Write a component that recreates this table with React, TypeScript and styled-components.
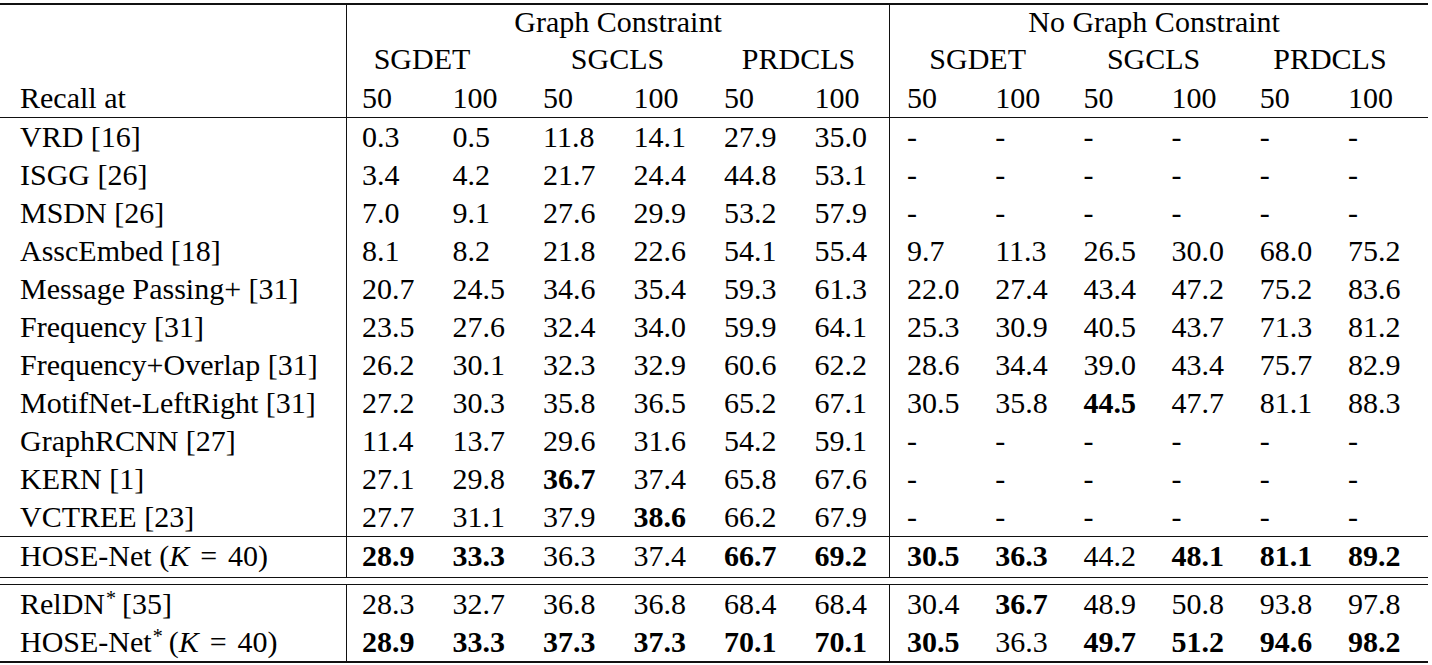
import React from 'react';
import styled, { createGlobalStyle } from 'styled-components';

const GlobalStyle = createGlobalStyle`
  html, body {
    margin: 0;
    padding: 0;
    background: #ffffff;
  }
  body {
    font-family: "Liberation Serif", "Times New Roman", serif;
    color: #000000;
  }
`;

const COLUMNS = '346px repeat(6, 90.5px) repeat(6, 88.2px)';

const Page = styled.div`
  width: 1432px;
  height: 665px;
  padding-top: 3px;
  box-sizing: border-box;
  overflow: hidden;
`;

const Table = styled.div`
  width: 1428px;
  border-top: 2px solid #111;
  border-bottom: 2px solid #111;
  font-size: 30px;
`;

const Row = styled.div<{ $h: number; $rule?: boolean; $pb?: number }>`
  display: grid;
  grid-template-columns: ${COLUMNS};
  height: ${p => p.$h}px;
  box-sizing: content-box;
  padding-right: 10px;
  border-bottom: ${p => (p.$rule ? '1px solid #111' : '0')};

  & > * {
    padding-bottom: ${p => p.$pb ?? 0}px;
  }
`;

const DoubleRule = styled.div`
  height: 6px;
  border-top: 1px solid #111;
  border-bottom: 1px solid #111;
`;

const Label = styled.div`
  display: flex;
  align-items: center;
  padding-left: 20px;
  white-space: nowrap;
`;

const Num = styled.div<{ $pad: number; $first?: boolean; $bold?: boolean }>`
  display: flex;
  align-items: center;
  padding-left: ${p => p.$pad}px;
  border-left: ${p => (p.$first ? '1px solid #111' : '0')};
  font-weight: ${p => (p.$bold ? 700 : 400)};
  white-space: nowrap;
`;

const GroupTitle = styled.div`
  grid-column: span 6;
  display: flex;
  align-items: center;
  justify-content: center;
  border-left: 1px solid #111;
`;

const SubTitle = styled.div<{ $first?: boolean; $shift?: number }>`
  grid-column: span 2;
  display: flex;
  align-items: center;
  justify-content: center;
  padding-right: ${p => p.$shift ?? 0}px;
  border-left: ${p => (p.$first ? '1px solid #111' : '0')};
`;

const Star = styled.span`
  display: inline-block;
  font-size: 20px;
  line-height: 0;
  position: relative;
  top: -6px;
  margin-left: 1px;
  margin-right: 6px;
`;

const Eq = styled.span`
  margin: 0 11px;
`;

type Method = {
  name: React.ReactNode;
  values: string[];
  bold?: number[];
  h?: number;
  pb?: number;
  rule?: boolean;
};

const DASH = ['-', '-', '-', '-', '-', '-'];

const kLabel = (name: React.ReactNode) => (
  <>
    {name} (<i>K</i>
    <Eq>=</Eq>40)
  </>
);

const methods: Method[] = [
  { name: 'VRD [16]', values: ['0.3', '0.5', '11.8', '14.1', '27.9', '35.0', ...DASH] },
  { name: 'ISGG [26]', values: ['3.4', '4.2', '21.7', '24.4', '44.8', '53.1', ...DASH] },
  { name: 'MSDN [26]', values: ['7.0', '9.1', '27.6', '29.9', '53.2', '57.9', ...DASH] },
  {
    name: 'AsscEmbed [18]',
    values: ['8.1', '8.2', '21.8', '22.6', '54.1', '55.4', '9.7', '11.3', '26.5', '30.0', '68.0', '75.2'],
  },
  {
    name: 'Message Passing+ [31]',
    values: ['20.7', '24.5', '34.6', '35.4', '59.3', '61.3', '22.0', '27.4', '43.4', '47.2', '75.2', '83.6'],
  },
  {
    name: 'Frequency [31]',
    values: ['23.5', '27.6', '32.4', '34.0', '59.9', '64.1', '25.3', '30.9', '40.5', '43.7', '71.3', '81.2'],
  },
  {
    name: 'Frequency+Overlap [31]',
    values: ['26.2', '30.1', '32.3', '32.9', '60.6', '62.2', '28.6', '34.4', '39.0', '43.4', '75.7', '82.9'],
  },
  {
    name: 'MotifNet-LeftRight [31]',
    values: ['27.2', '30.3', '35.8', '36.5', '65.2', '67.1', '30.5', '35.8', '44.5', '47.7', '81.1', '88.3'],
    bold: [8],
  },
  { name: 'GraphRCNN [27]', values: ['11.4', '13.7', '29.6', '31.6', '54.2', '59.1', ...DASH] },
  { name: 'KERN [1]', values: ['27.1', '29.8', '36.7', '37.4', '65.8', '67.6', ...DASH], bold: [2] },
  { name: 'VCTREE [23]', values: ['27.7', '31.1', '37.9', '38.6', '66.2', '67.9', ...DASH], bold: [3], rule: true },
  {
    name: kLabel('HOSE-Net'),
    values: ['28.9', '33.3', '36.3', '37.4', '66.7', '69.2', '30.5', '36.3', '44.2', '48.1', '81.1', '89.2'],
    bold: [0, 1, 4, 5, 6, 7, 9, 10, 11],
    h: 40,
    pb: 2,
  },
];

const starred: Method[] = [
  {
    name: (
      <>
        RelDN<Star>*</Star>[35]
      </>
    ),
    values: ['28.3', '32.7', '36.8', '36.8', '68.4', '68.4', '30.4', '36.7', '48.9', '50.8', '93.8', '97.8'],
    bold: [7],
  },
  {
    name: (
      <>
        HOSE-Net<Star>*</Star>(<i>K</i>
        <Eq>=</Eq>40)
      </>
    ),
    values: ['28.9', '33.3', '37.3', '37.3', '70.1', '70.1', '30.5', '36.3', '49.7', '51.2', '94.6', '98.2'],
    bold: [0, 1, 2, 3, 4, 5, 6, 8, 9, 10, 11],
  },
];

const padFor = (i: number) => {
  if (i === 0) return 15;
  if (i === 6) return 17;
  return i < 6 ? 16 : 18;
};

const NumCells = ({ values, bold = [] }: { values: string[]; bold?: number[] }) => (
  <>
    {values.map((v, i) => (
      <Num key={i} $pad={padFor(i)} $first={i === 0 || i === 6} $bold={bold.includes(i)}>
        {v}
      </Num>
    ))}
  </>
);

const MethodRow = ({ m }: { m: Method }) => (
  <Row $h={m.h ?? 38} $rule={m.rule} $pb={m.pb}>
    <Label>{m.name}</Label>
    <NumCells values={m.values} bold={m.bold} />
  </Row>
);

const App = () => {
  const recall = ['50', '100', '50', '100', '50', '100', '50', '100', '50', '100', '50', '100'];

  return (
    <Page>
      <GlobalStyle />
      <Table>
        <Row $h={35} $pb={7}>
          <Label />
          <GroupTitle>Graph Constraint</GroupTitle>
          <GroupTitle>No Graph Constraint</GroupTitle>
        </Row>
        <Row $h={38}>
          <Label />
          <SubTitle $first $shift={30}>
            SGDET
          </SubTitle>
          <SubTitle>SGCLS</SubTitle>
          <SubTitle>PRDCLS</SubTitle>
          <SubTitle $first>SGDET</SubTitle>
          <SubTitle>SGCLS</SubTitle>
          <SubTitle>PRDCLS</SubTitle>
        </Row>
        <Row $h={39} $rule>
          <Label>Recall at</Label>
          <NumCells values={recall} />
        </Row>

        {methods.map((m, i) => (
          <MethodRow key={i} m={m} />
        ))}

        <DoubleRule />

        {starred.map((m, i) => (
          <MethodRow key={i} m={m} />
        ))}
      </Table>
    </Page>
  );
};

export default App;
